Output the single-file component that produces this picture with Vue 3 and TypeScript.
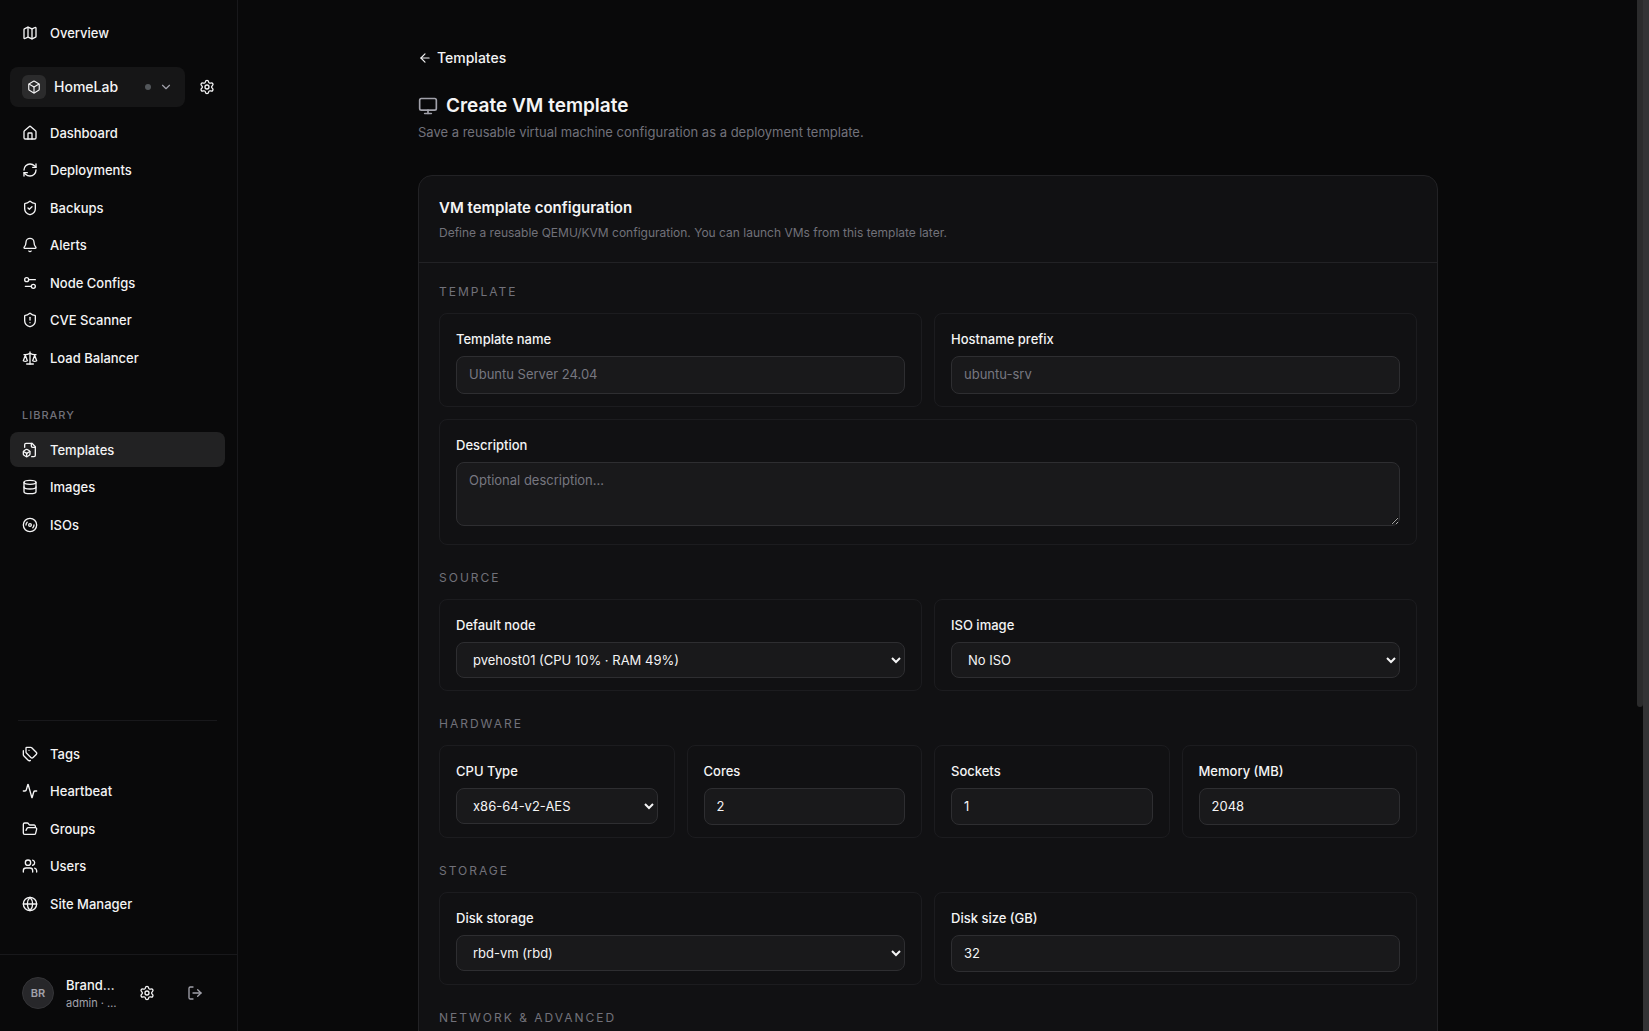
<script setup lang="ts">
import { ref } from 'vue'

type Shape = string[]

interface NavItem {
  label: string
  icon: string
  active?: boolean
}

// 24x24 stroke icons: every entry is a list of path data
const icons: Record<string, Shape> = {
  map: [
    'M14.1 5.55a2 2 0 0 0 1.8 0l3.65-1.83A1 1 0 0 1 21 4.62v12.76a1 1 0 0 1-.55.9l-4.55 2.27a2 2 0 0 1-1.8 0l-4.2-2.1a2 2 0 0 0-1.8 0l-3.65 1.83A1 1 0 0 1 3 19.38V6.62a1 1 0 0 1 .55-.9l4.55-2.27a2 2 0 0 1 1.8 0z',
    'M15 5.76v15', 'M9 3.24v15',
  ],
  box: [
    'M21 8a2 2 0 0 0-1-1.73l-7-4a2 2 0 0 0-2 0l-7 4A2 2 0 0 0 3 8v8a2 2 0 0 0 1 1.73l7 4a2 2 0 0 0 2 0l7-4A2 2 0 0 0 21 16Z',
    'm3.3 7 8.7 5 8.7-5', 'M12 22V12',
  ],
  chevron: ['m6 9 6 6 6-6'],
  settings: [
    'M9.67 4.14a2.34 2.34 0 0 1 4.66 0 2.34 2.34 0 0 0 3.32 1.91 2.34 2.34 0 0 1 2.33 4.03 2.34 2.34 0 0 0 0 3.84 2.34 2.34 0 0 1-2.33 4.03 2.34 2.34 0 0 0-3.32 1.91 2.34 2.34 0 0 1-4.66 0 2.34 2.34 0 0 0-3.32-1.91 2.34 2.34 0 0 1-2.33-4.03 2.34 2.34 0 0 0 0-3.84 2.34 2.34 0 0 1 2.33-4.03 2.34 2.34 0 0 0 3.32-1.91',
    'M15 12a3 3 0 1 1-6 0 3 3 0 0 1 6 0',
  ],
  home: [
    'M15 21v-8a1 1 0 0 0-1-1h-4a1 1 0 0 0-1 1v8',
    'M3 10a2 2 0 0 1 .71-1.53l7-6a2 2 0 0 1 2.58 0l7 6A2 2 0 0 1 21 10v9a2 2 0 0 1-2 2H5a2 2 0 0 1-2-2z',
  ],
  refresh: [
    'M3 12a9 9 0 0 1 9-9 9.75 9.75 0 0 1 6.74 2.74L21 8', 'M21 3v5h-5',
    'M21 12a9 9 0 0 1-9 9 9.75 9.75 0 0 1-6.74-2.74L3 16', 'M8 16H3v5',
  ],
  shieldCheck: [
    'M20 13c0 5-3.5 7.5-7.66 8.95a1 1 0 0 1-.67-.01C7.5 20.5 4 18 4 13V6a1 1 0 0 1 1-1c2 0 4.5-1.2 6.24-2.72a1.17 1.17 0 0 1 1.52 0C14.51 3.81 17 5 19 5a1 1 0 0 1 1 1z',
    'm9 12 2 2 4-4',
  ],
  bell: [
    'M10.27 21a2 2 0 0 0 3.46 0',
    'M3.26 15.33A1 1 0 0 0 4 17h16a1 1 0 0 0 .74-1.67C19.41 13.96 18 12.5 18 8A6 6 0 0 0 6 8c0 4.5-1.41 5.96-2.74 7.33',
  ],
  sliders: [
    'M20 7h-9', 'M14 17H5',
    'M20 17a3 3 0 1 1-6 0 3 3 0 0 1 6 0', 'M10 7a3 3 0 1 1-6 0 3 3 0 0 1 6 0',
  ],
  shieldAlert: [
    'M20 13c0 5-3.5 7.5-7.66 8.95a1 1 0 0 1-.67-.01C7.5 20.5 4 18 4 13V6a1 1 0 0 1 1-1c2 0 4.5-1.2 6.24-2.72a1.17 1.17 0 0 1 1.52 0C14.51 3.81 17 5 19 5a1 1 0 0 1 1 1z',
    'M12 8v4', 'M12 16h.01',
  ],
  scale: [
    'm16 16 3-8 3 8c-.87.65-1.92 1-3 1s-2.13-.35-3-1Z', 'm2 16 3-8 3 8c-.87.65-1.92 1-3 1s-2.13-.35-3-1Z',
    'M7 21h10', 'M12 3v18', 'M3 7h2c2 0 5-1 7-2 2 1 5 2 7 2h2',
  ],
  fileBox: [
    'M14.5 22H18a2 2 0 0 0 2-2V7l-5-5H6a2 2 0 0 0-2 2v4', 'M14 2v4a2 2 0 0 0 2 2h4',
    'M3 13.1a2 2 0 0 0-1 1.76v3.24a2 2 0 0 0 .97 1.78L6 21.7a2 2 0 0 0 2.03.01L11 19.9a2 2 0 0 0 1-1.76V14.9a2 2 0 0 0-.97-1.78L8 11.3a2 2 0 0 0-2.03-.01Z',
    'M7 17v5', 'M11.7 14.2 7 17l-4.7-2.8',
  ],
  database: ['M21 5c0 1.66-4 3-9 3S3 6.66 3 5s4-3 9-3 9 1.34 9 3', 'M3 5v14a9 3 0 0 0 18 0V5', 'M3 12a9 3 0 0 0 18 0'],
  disc: [
    'M22 12a10 10 0 1 1-20 0 10 10 0 0 1 20 0', 'M14 12a2 2 0 1 1-4 0 2 2 0 0 1 4 0',
    'M6 12c0-1.7.7-3.2 1.8-4.2', 'M18 12c0 1.7-.7 3.2-1.8 4.2',
  ],
  tags: [
    'M13.17 2a2 2 0 0 1 1.42.59l6.7 6.7a2.43 2.43 0 0 1 0 3.42l-4.58 4.58a2.43 2.43 0 0 1-3.42 0l-6.7-6.7A2 2 0 0 1 6 9.17V3a1 1 0 0 1 1-1z',
    'M2 7v6.17a2 2 0 0 0 .59 1.42l6.7 6.7a2.43 2.43 0 0 0 3.19.23', 'M10.5 6.5h.01',
  ],
  activity: ['M22 12h-2.48a2 2 0 0 0-1.93 1.46l-2.35 8.36a.25.25 0 0 1-.48 0L9.24 2.18a.25.25 0 0 0-.48 0l-2.35 8.36A2 2 0 0 1 4.49 12H2'],
  folder: ['m6 14 1.5-2.9A2 2 0 0 1 9.24 10H20a2 2 0 0 1 1.94 2.5l-1.54 6a2 2 0 0 1-1.95 1.5H4a2 2 0 0 1-2-2V5a2 2 0 0 1 2-2h3.9a2 2 0 0 1 1.69.9l.81 1.2a2 2 0 0 0 1.67.9H18a2 2 0 0 1 2 2v2'],
  users: [
    'M16 21v-2a4 4 0 0 0-4-4H6a4 4 0 0 0-4 4v2', 'M13 7a4 4 0 1 1-8 0 4 4 0 0 1 8 0',
    'M22 21v-2a4 4 0 0 0-3-3.87', 'M16 3.13a4 4 0 0 1 0 7.75',
  ],
  globe: ['M22 12a10 10 0 1 1-20 0 10 10 0 0 1 20 0', 'M12 2a14.5 14.5 0 0 0 0 20 14.5 14.5 0 0 0 0-20', 'M2 12h20'],
  logout: ['m16 17 5-5-5-5', 'M21 12H9', 'M9 21H5a2 2 0 0 1-2-2V5a2 2 0 0 1 2-2h4'],
  arrow: ['m12 19-7-7 7-7', 'M19 12H5'],
  monitor: ['M4 3h16a2 2 0 0 1 2 2v10a2 2 0 0 1-2 2H4a2 2 0 0 1-2-2V5a2 2 0 0 1 2-2z', 'M8 21h8', 'M12 17v4'],
}

const clusterNav: NavItem[] = [
  { label: 'Dashboard', icon: 'home' },
  { label: 'Deployments', icon: 'refresh' },
  { label: 'Backups', icon: 'shieldCheck' },
  { label: 'Alerts', icon: 'bell' },
  { label: 'Node Configs', icon: 'sliders' },
  { label: 'CVE Scanner', icon: 'shieldAlert' },
  { label: 'Load Balancer', icon: 'scale' },
]
const libraryNav: NavItem[] = [
  { label: 'Templates', icon: 'fileBox', active: true },
  { label: 'Images', icon: 'database' },
  { label: 'ISOs', icon: 'disc' },
]
const adminNav: NavItem[] = [
  { label: 'Tags', icon: 'tags' },
  { label: 'Heartbeat', icon: 'activity' },
  { label: 'Groups', icon: 'folder' },
  { label: 'Users', icon: 'users' },
  { label: 'Site Manager', icon: 'globe' },
]

const name = ref('')
const hostname = ref('')
const description = ref('')
const cores = ref(2)
const sockets = ref(1)
const memory = ref(2048)
const diskSize = ref(32)
</script>

<template>
  <div class="shell">
    <aside class="sidebar">
      <nav class="top" aria-label="Overview">
        <a href="#" class="item">
          <svg class="icon" viewBox="0 0 24 24"><path v-for="d in icons.map" :key="d" :d="d" /></svg>Overview
        </a>
      </nav>
      <div class="cluster">
        <button type="button" class="switcher">
          <span class="tile"><svg class="icon small" viewBox="0 0 24 24"><path v-for="d in icons.box" :key="d" :d="d" /></svg></span>
          <span class="cluster-name">HomeLab</span>
          <span class="dot"></span>
          <svg class="icon small muted" viewBox="0 0 24 24"><path v-for="d in icons.chevron" :key="d" :d="d" /></svg>
        </button>
        <button type="button" class="icon-button" aria-label="Cluster settings">
          <svg class="icon" viewBox="0 0 24 24"><path v-for="d in icons.settings" :key="d" :d="d" /></svg>
        </button>
      </div>
      <nav class="list seven" aria-label="Cluster">
        <a v-for="n in clusterNav" :key="n.label" href="#" class="item">
          <svg class="icon" viewBox="0 0 24 24"><path v-for="d in icons[n.icon]" :key="d" :d="d" /></svg>{{ n.label }}
        </a>
      </nav>
      <h2 class="group">LIBRARY</h2>
      <nav class="list three" aria-label="Library">
        <a v-for="n in libraryNav" :key="n.label" href="#" class="item" :class="{ active: n.active }">
          <svg class="icon" viewBox="0 0 24 24"><path v-for="d in icons[n.icon]" :key="d" :d="d" /></svg>{{ n.label }}
        </a>
      </nav>
      <div class="admin">
        <nav class="list five" aria-label="Administration">
          <a v-for="n in adminNav" :key="n.label" href="#" class="item">
            <svg class="icon" viewBox="0 0 24 24"><path v-for="d in icons[n.icon]" :key="d" :d="d" /></svg>{{ n.label }}
          </a>
        </nav>
      </div>
      <footer class="user">
        <span class="avatar">BR</span>
        <div class="who">
          <span class="who-name">Brand…</span>
          <span class="who-role">admin · …</span>
        </div>
        <div class="user-actions">
          <button type="button" class="icon-button" aria-label="Account settings">
            <svg class="icon" viewBox="0 0 24 24"><path v-for="d in icons.settings" :key="d" :d="d" /></svg>
          </button>
          <button type="button" class="icon-button dim" aria-label="Sign out">
            <svg class="icon" viewBox="0 0 24 24"><path v-for="d in icons.logout" :key="d" :d="d" /></svg>
          </button>
        </div>
      </footer>
    </aside>

    <main class="main">
      <div class="column">
        <a href="#" class="back">
          <svg class="icon small" viewBox="0 0 24 24"><path v-for="d in icons.arrow" :key="d" :d="d" /></svg>Templates
        </a>
        <h1 class="title">
          <svg class="icon large" viewBox="0 0 24 24"><path v-for="d in icons.monitor" :key="d" :d="d" /></svg>Create VM template
        </h1>
        <p class="subtitle">Save a reusable virtual machine configuration as a deployment template.</p>

        <form class="card" @submit.prevent>
          <header class="card-head">
            <h2>VM template configuration</h2>
            <p>Define a reusable QEMU/KVM configuration. You can launch VMs from this template later.</p>
          </header>
          <div class="card-body">
            <section>
              <h3>TEMPLATE</h3>
              <div class="grid">
                <div class="field">
                  <label for="name">Template name</label>
                  <input id="name" v-model="name" type="text" placeholder="Ubuntu Server 24.04" />
                </div>
                <div class="field">
                  <label for="host">Hostname prefix</label>
                  <input id="host" v-model="hostname" type="text" placeholder="ubuntu-srv" />
                </div>
                <div class="field wide">
                  <label for="desc">Description</label>
                  <textarea id="desc" v-model="description" placeholder="Optional description..."></textarea>
                </div>
              </div>
            </section>
            <section>
              <h3>SOURCE</h3>
              <div class="grid">
                <div class="field">
                  <label for="node">Default node</label>
                  <select id="node"><option>pvehost01 (CPU 10% · RAM 49%)</option></select>
                </div>
                <div class="field">
                  <label for="iso">ISO image</label>
                  <select id="iso"><option>No ISO</option></select>
                </div>
              </div>
            </section>
            <section>
              <h3>HARDWARE</h3>
              <div class="grid four">
                <div class="field">
                  <label for="cpu">CPU Type</label>
                  <select id="cpu"><option>x86-64-v2-AES</option></select>
                </div>
                <div class="field">
                  <label for="cores">Cores</label>
                  <input id="cores" v-model="cores" type="number" />
                </div>
                <div class="field">
                  <label for="sockets">Sockets</label>
                  <input id="sockets" v-model="sockets" type="number" />
                </div>
                <div class="field">
                  <label for="memory">Memory (MB)</label>
                  <input id="memory" v-model="memory" type="number" />
                </div>
              </div>
            </section>
            <section>
              <h3>STORAGE</h3>
              <div class="grid">
                <div class="field">
                  <label for="storage">Disk storage</label>
                  <select id="storage"><option>rbd-vm (rbd)</option></select>
                </div>
                <div class="field">
                  <label for="size">Disk size (GB)</label>
                  <input id="size" v-model="diskSize" type="number" />
                </div>
              </div>
            </section>
            <section>
              <h3>NETWORK &amp; ADVANCED</h3>
            </section>
          </div>
        </form>
      </div>
    </main>
    <div class="scrollbar" aria-hidden="true"><div class="thumb"></div><div class="edge"></div></div>
  </div>
</template>

<style>
html {
  color-scheme: dark;
}
body {
  background: #09090a;
}
</style>

<style scoped>
.shell {
  display: flex;
  height: 100vh;
  overflow: hidden;
  background: #09090a;
  color: #f4f4f5;
  font-family: Inter, "Noto Sans", sans-serif;
  font-size: 14px;
  line-height: 20px;
}
.shell *,
.shell *::before {
  box-sizing: border-box;
}
h1, h2, h3, p {
  margin: 0;
}
a {
  color: inherit;
  text-decoration: none;
}
button {
  border: 0;
  padding: 0;
  background: none;
  color: inherit;
  font: inherit;
}
.icon {
  flex: none;
  width: 16px;
  height: 16px;
  fill: none;
  stroke: currentColor;
  stroke-width: 2;
  stroke-linecap: round;
  stroke-linejoin: round;
}
.icon.small {
  width: 14px;
  height: 14px;
}
.icon.large {
  width: 20px;
  height: 20px;
  color: #a1a1aa;
}
.icon.muted {
  color: #a1a1aa;
}

/* sidebar */
.sidebar {
  display: flex;
  flex: none;
  flex-direction: column;
  width: 238px;
  border-right: 1px solid #18181b;
  font-size: 13px;
}
.top {
  padding: 15px 12px 0 10px;
}
.item {
  display: flex;
  align-items: center;
  gap: 12px;
  height: 35px;
  padding: 0 12px;
  border-radius: 8px;
  font-weight: 500;
}
.item.active {
  background: #222223;
}
.cluster {
  display: flex;
  align-items: center;
  gap: 6px;
  padding: 17px 10px 8px;
}
.switcher {
  display: flex;
  flex: none;
  align-items: center;
  width: 175px;
  height: 40px;
  padding: 0 12px;
  border-radius: 8px;
  background: #161617;
  font-size: 14px;
  font-weight: 500;
}
.tile {
  display: grid;
  place-items: center;
  width: 24px;
  height: 24px;
  margin-right: 8px;
  border-radius: 6px;
  background: #2b2b2c;
}
.cluster-name {
  flex: 1;
  text-align: left;
}
.dot {
  width: 6px;
  height: 6px;
  margin-right: 8px;
  border-radius: 50%;
  background: #52565a;
}
.icon-button {
  display: grid;
  flex: none;
  place-items: center;
  width: 32px;
  height: 32px;
}
.icon-button.dim {
  color: #a1a1aa;
}
.list {
  display: flex;
  flex-direction: column;
  justify-content: space-between;
  padding: 0 12px 0 10px;
}
.seven {
  min-height: 260px;
}
.three {
  min-height: 110px;
}
.five {
  min-height: 185px;
}
.group {
  margin: 32px 0 9px 22px;
  color: #71717a;
  font-size: 11px;
  font-weight: 500;
  line-height: 16px;
  letter-spacing: 1px;
}
.admin {
  margin-top: auto;
  padding-bottom: 33px;
}
.admin::before {
  display: block;
  height: 1px;
  margin: 0 20px 15px 18px;
  background: #18181b;
  content: "";
}
.user {
  display: flex;
  align-items: center;
  height: 77px;
  padding: 0 22px;
  border-top: 1px solid #18181b;
}
.avatar {
  display: grid;
  flex: none;
  place-items: center;
  width: 32px;
  height: 32px;
  border: 1px solid #343437;
  border-radius: 50%;
  background: #27272a;
  color: #a1a1aa;
  font-size: 11px;
  font-weight: 600;
}
.who {
  display: flex;
  flex: 1;
  flex-direction: column;
  margin-left: 12px;
  white-space: nowrap;
}
.who-name {
  font-weight: 500;
}
.who-role {
  color: #a1a1aa;
  font-size: 11px;
  line-height: 16px;
}
.user-actions {
  display: flex;
  gap: 16px;
  padding-right: 4px;
}

/* main */
.main {
  flex: 1;
  min-width: 0;
  padding: 48px 19px 0 0;
  overflow: hidden;
}
.column {
  max-width: 1020px;
  margin: 0 auto;
}
.back {
  display: flex;
  align-items: center;
  gap: 5px;
  font-weight: 500;
}
.title {
  display: flex;
  align-items: center;
  gap: 8px;
  margin-top: 24px;
  font-size: 19px;
  font-weight: 600;
  line-height: 28px;
}
.subtitle {
  margin-top: 2px;
  color: #71717a;
  font-size: 13px;
}
.card {
  margin-top: 33px;
  border: 1px solid #222225;
  border-radius: 14px;
  background: #111113;
}
.card-head {
  padding: 20px 20px 19px;
  border-bottom: 1px solid #222225;
}
.card-head h2 {
  font-size: 15px;
  font-weight: 600;
  line-height: 24px;
}
.card-head p {
  margin-top: 3px;
  color: #71717a;
  font-size: 12px;
}
.card-body {
  display: flex;
  flex-direction: column;
  gap: 24px;
  padding: 20px;
}
h3 {
  margin-bottom: 12px;
  color: #71717a;
  font-size: 12px;
  font-weight: 400;
  line-height: 18px;
  letter-spacing: 2px;
}
.grid {
  display: grid;
  grid-template-columns: 1fr 1fr;
  gap: 12px;
}
.grid.four {
  grid-template-columns: repeat(4, 1fr);
}
.field {
  min-width: 0;
  padding: 16px 16px 12px;
  border: 1px solid #1c1c1f;
  border-radius: 8px;
}
.field.wide {
  grid-column: 1 / -1;
  padding-bottom: 18px;
}
label {
  display: block;
  margin-bottom: 8px;
  font-size: 13px;
  font-weight: 500;
  line-height: 18px;
}
input,
select,
textarea {
  display: block;
  width: 100%;
  margin: 0;
  padding: 0 12px;
  border: 1px solid #2e2e31;
  border-radius: 8px;
  outline: none;
  background: #19191b;
  color: #f4f4f5;
  font: inherit;
  font-size: 13px;
}
input {
  height: 38px;
  padding-bottom: 2px;
}
input[type="number"] {
  height: 37px;
  appearance: textfield;
}
select {
  height: 36px;
}
textarea {
  height: 64px;
  padding: 7px 12px;
  line-height: 20px;
  resize: vertical;
}
::placeholder {
  color: #777780;
}

/* scroll track on the window's right side */
.scrollbar {
  display: grid;
  flex: none;
  grid-template-columns: 6px 6px;
}
.thumb {
  height: 707px;
  border-radius: 0 0 3px 3px;
  background: #2b2b2c;
}
.edge {
  background: #333335;
}
</style>
